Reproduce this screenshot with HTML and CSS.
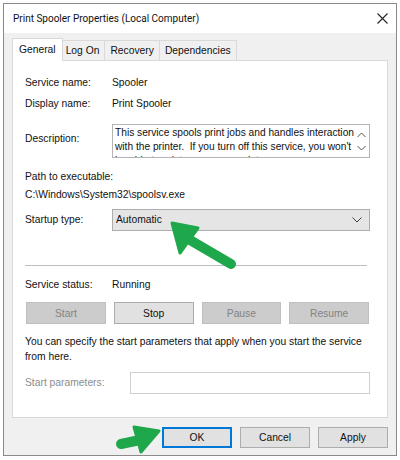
FILE: index.html
```html
<!DOCTYPE html>
<html>
<head>
    <title>Print Spooler Properties</title>
    <link rel="stylesheet" href="styles.css">
</head>
<body>
    <div class="window">
        <div class="titlebar">
            <span class="title">Print Spooler Properties (Local Computer)</span>
            <svg class="close" width="11" height="11" viewBox="0 0 11 11">
                <path d="M0.5 0.5 L10.5 10.5 M10.5 0.5 L0.5 10.5" stroke="#222" stroke-width="1.1" fill="none"/>
            </svg>
        </div>
        <div class="dialog">
            <div class="tabs">
                <div class="tab active">General</div>
                <div class="tab">Log On</div>
                <div class="tab">Recovery</div>
                <div class="tab">Dependencies</div>
            </div>
            <div class="panel">
                <div class="row first">
                    <span class="label">Service name:</span>
                    <span>Spooler</span>
                </div>
                <div class="row second">
                    <span class="label">Display name:</span>
                    <span>Print Spooler</span>
                </div>
                <div class="row desc-row">
                    <span class="label desc-label">Description:</span>
                    <div class="textbox">
                        <div class="textbox-text">This service spools print jobs and handles interaction<br>with the printer.&nbsp; If you turn off this service, you won't<br>be able to print or see your printers.</div>
                        <div class="scroll">
                            <svg width="9" height="6" viewBox="0 0 9 6"><path d="M0.5 5 L4.5 1 L8.5 5" stroke="#555" fill="none"/></svg>
                            <svg width="9" height="6" viewBox="0 0 9 6"><path d="M0.5 1 L4.5 5 L8.5 1" stroke="#555" fill="none"/></svg>
                        </div>
                    </div>
                </div>
                <div class="path-label">Path to executable:</div>
                <div class="path">C:\Windows\System32\spoolsv.exe</div>
                <div class="row startup">
                    <span class="label">Startup type:</span>
                    <div class="select">
                        <span>Automatic</span>
                        <svg width="10" height="6" viewBox="0 0 10 6"><path d="M0.5 0.5 L5 5 L9.5 0.5" stroke="#444" fill="none"/></svg>
                    </div>
                </div>
                <div class="separator"></div>
                <div class="row status">
                    <span class="label">Service status:</span>
                    <span>Running</span>
                </div>
                <div class="service-buttons">
                    <button class="btn disabled">Start</button>
                    <button class="btn">Stop</button>
                    <button class="btn disabled">Pause</button>
                    <button class="btn disabled">Resume</button>
                </div>
                <p class="hint">You can specify the start parameters that apply when you start the service from here.</p>
                <div class="row params">
                    <span class="label params-label">Start parameters:</span>
                    <div class="input"></div>
                </div>
            </div>
            <div class="actions">
                <button class="btn action default">OK</button>
                <button class="btn action">Cancel</button>
                <button class="btn action">Apply</button>
            </div>
        </div>
    </div>

    <!-- green arrows drawn over the screenshot -->
    <svg class="arrows" width="400" height="460" viewBox="0 0 400 460">
        <line x1="190" y1="240" x2="231" y2="264" stroke="#1ea84b" stroke-width="10" stroke-linecap="round"/>
        <polygon points="172,223 198,228 180,253" fill="#1ea84b" stroke="#1ea84b" stroke-width="3" stroke-linejoin="round"/>
        <line x1="140" y1="440" x2="121" y2="444" stroke="#1ea84b" stroke-width="10" stroke-linecap="round"/>
        <polygon points="159,431 134,427 141,452" fill="#1ea84b" stroke="#1ea84b" stroke-width="3" stroke-linejoin="round"/>
    </svg>
</body>
</html>
```

FILE: styles.css
```css
body {
    margin: 0;
    background-color: #fff;
    font-family: "Liberation Sans", Arial, sans-serif;
    font-size: 10.3px;
    color: #111;
}

.window {
    margin: 3px;
    width: 392px;
    height: 451px;
    border: 1px solid #8a8a8a;
    display: flex;
    flex-direction: column;
}

.titlebar {
    height: 29px;
    flex-shrink: 0;
    background-color: #fff;
    display: flex;
    align-items: center;
    justify-content: space-between;
    padding: 0 8px 0 9px;
}

.title {
    font-family: Roboto, "Liberation Sans", sans-serif;
    font-size: 10px;
    color: #111;
}

.dialog {
    flex: 1;
    background-color: #f0f0f0;
    padding: 5px 8px 0 8px;
    display: flex;
    flex-direction: column;
}

/* Tabs */
.tabs {
    display: flex;
    align-items: flex-end;
    height: 22px;
    padding-left: 2px;
}

.tab {
    height: 19px;
    line-height: 19px;
    padding: 0 5px;
    border: 1px solid #d9d9d9;
    border-bottom: none;
    margin-left: -1px;
    background-color: #f0f0f0;
}

.tab.active {
    height: 22px;
    line-height: 21px;
    margin-left: -2px;
    margin-right: -2px;
    padding: 0 6px;
    margin-bottom: -1px;
    background-color: #fff;
    position: relative;
    z-index: 1;
}

.panel {
    box-sizing: border-box;
    height: 358px;
    flex-shrink: 0;
    background-color: #fff;
    border: 1px solid #d9d9d9;
    padding: 15px 17px 0 12px;
}

/* Rows */
.row {
    display: flex;
    align-items: center;
    line-height: 14px;
}

.label {
    width: 87px;
    flex-shrink: 0;
}

.second {
    margin-top: 7px;
}

.desc-row {
    margin-top: 13px;
    align-items: flex-start;
}

.desc-label {
    margin-top: 8px;
}

.textbox {
    flex: 1;
    height: 32px;
    border: 1px solid #b4b4b4;
    display: flex;
    overflow: hidden;
}

.textbox-text {
    flex: 1;
    padding: 1px 0 0 2px;
    font-size: 10.2px;
    line-height: 14px;
    white-space: nowrap;
    overflow: hidden;
}

.scroll {
    width: 15px;
    display: flex;
    flex-direction: column;
    align-items: center;
    justify-content: space-around;
    padding: 3px 0;
}

.path-label {
    margin-top: 12px;
    line-height: 14px;
}

.path {
    margin-top: 4px;
    line-height: 14px;
}

.startup {
    margin-top: 7px;
}

.select {
    flex: 1;
    height: 22px;
    box-sizing: border-box;
    border: 1px solid #adadad;
    background-color: #e5e5e5;
    display: flex;
    align-items: center;
    justify-content: space-between;
    padding: 0 7px 0 3px;
}

.separator {
    margin: 34px 3px 0 0;
    height: 1px;
    background-color: #bdbdbd;
    border-bottom: 1px solid #fff;
}

.status {
    margin-top: 11px;
}

/* Buttons */
.service-buttons {
    display: grid;
    grid-template-columns: repeat(4, 1fr);
    column-gap: 8px;
    margin: 10px 1px 0 1px;
}

.btn {
    height: 22px;
    border: 1px solid #adadad;
    background-color: #e1e1e1;
    font-family: "Liberation Sans", Arial, sans-serif;
    font-size: 10.3px;
    color: #111;
    padding: 0;
}

.btn.disabled {
    background-color: #cccccc;
    border-color: #bfbfbf;
    color: #838383;
}

.hint {
    margin: 10px 0 0 0;
    line-height: 15px;
}

.params {
    margin-top: 8px;
}

.params-label {
    width: 105px;
    color: #8d8d8d;
}

.input {
    flex: 1;
    height: 22px;
    box-sizing: border-box;
    border: 1px solid #cfcfcf;
    background-color: #fff;
}

.actions {
    display: flex;
    justify-content: flex-end;
    gap: 8px;
    margin-top: 9px;
}

.action {
    width: 70px;
    height: 21px;
}

.action.default {
    border: 1px solid #0078d7;
    box-shadow: inset 0 0 0 1px #0078d7;
}

.arrows {
    position: absolute;
    left: 0;
    top: 0;
    pointer-events: none;
}
```
